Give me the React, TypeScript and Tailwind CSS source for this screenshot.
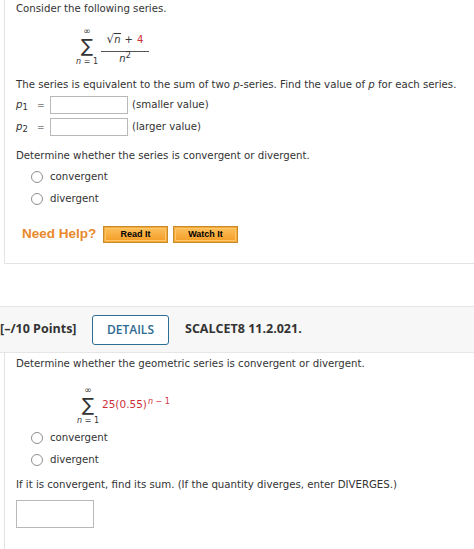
import React from 'react';

const Radio = ({ label }: { label: string }) => (
    <div className="flex items-center h-[22px]">
        <span className="ml-[26px] w-[12px] h-[12px] rounded-full border border-[#8f8f8f] bg-white" />
        <span className="ml-[7px] leading-none">{label}</span>
    </div>
);

const SumColumn = () => (
    <div className="w-[28px] flex flex-col items-center text-[#333]">
        <div className="h-[8px] text-[9px] leading-[6px]">∞</div>
        <div className="h-[15px] text-[18px] leading-[19px]">∑</div>
        <div className="mt-[6px] h-[10px] text-[8px] leading-[10px] whitespace-nowrap">
            <i>n</i> = 1
        </div>
    </div>
);

const HelpButton = ({ label }: { label: string }) => (
    <div className="w-[65px] h-[17px] border border-[#c98a2c] bg-[#f7a935] p-[1px]">
        <div className="h-full border border-[#fcc66c] bg-gradient-to-b from-[#fbbd55] to-[#f5a02a] flex items-center justify-center text-[9px] font-bold text-black font-['Liberation_Sans',Arial,sans-serif] leading-none">
            {label}
        </div>
    </div>
);

const PRow = ({ sub, note }: { sub: string; note: string }) => (
    <div className="flex items-center h-[22px]">
        <span className="w-[21px] italic leading-none">
            p<sub className="not-italic text-[8.5px]">{sub}</sub>
        </span>
        <span className="w-[13px] text-[9px] leading-none">=</span>
        <span className="w-[78px] h-[18px] border border-[#b8b8b8] bg-white" />
        <span className="ml-[4px] leading-none">{note}</span>
    </div>
);

export default function App() {
    return (
        <div className="w-[474px] h-[549px] overflow-hidden bg-white text-[#333] text-[10.2px] font-['DejaVu_Sans',Verdana,sans-serif]">
            <div className="ml-[4px] border-l border-b border-[#e3e3e3] h-[264px] pl-[11px]">
                <div className="h-[17px] leading-[17px]">Consider the following series.</div>
                <div className="mt-[11px] ml-[57px] flex h-[42px]">
                    <SumColumn />
                    <div className="flex flex-col items-center w-[48px]">
                        <div className="w-full h-[24px] border-b border-[#555] flex items-end justify-center pb-[6px] leading-none text-[10px]">
                            <span className="text-[12px] leading-none">√</span>
                            <span className="border-t border-[#333] pt-[1px] italic">n</span>
                            <span className="ml-[4px]">+</span>
                            <span className="ml-[4px] text-[#cc2f3b]">4</span>
                        </div>
                        <div className="pt-[1px] text-[10px] leading-[12px]">
                            <i>n</i>
                            <sup className="text-[8px]">2</sup>
                        </div>
                    </div>
                </div>
                <div className="mt-[6px] h-[18px] leading-[18px] whitespace-nowrap">
                    The series is equivalent to the sum of two <i>p</i>-series. Find the value of <i>p</i> for each series.
                </div>
                <PRow sub="1" note="(smaller value)" />
                <PRow sub="2" note="(larger value)" />
                <div className="mt-[9px] h-[18px] leading-[18px]">
                    Determine whether the series is convergent or divergent.
                </div>
                <div className="-ml-[11px] mt-[1px]">
                    <Radio label="convergent" />
                    <Radio label="divergent" />
                </div>
                <div className="mt-[14px] ml-[6px] h-[20px] flex items-center">
                    <span className="text-[13.5px] font-bold text-[#e8892c] font-['Liberation_Sans',Arial,sans-serif] leading-none w-[81px]">
                        Need Help?
                    </span>
                    <div className="flex gap-[5px]">
                        <HelpButton label="Read It" />
                        <HelpButton label="Watch It" />
                    </div>
                </div>
            </div>
            <div className="h-[42px]" />
            <div className="border-t border-b border-[#e6e6e6] bg-[#f7f7f7] h-[47px] flex items-center font-['Open_Sans',sans-serif] font-bold text-[12.5px] text-[#333]">
                <span className="w-[92px]">[–/10 Points]</span>
                <span className="w-[77px] h-[30px] border border-[#2e6d92] rounded-[3px] bg-white flex items-center justify-center font-semibold text-[12px] text-[#2d6a8f]">
                    DETAILS
                </span>
                <span className="ml-[16px]">SCALCET8 11.2.021.</span>
            </div>
            <div className="ml-[4px] border-l border-[#e3e3e3] pl-[11px] pt-[2px] h-[200px]">
                <div className="h-[18px] leading-[18px]">
                    Determine whether the geometric series is convergent or divergent.
                </div>
                <div className="mt-[14px] ml-[58px] flex h-[39px]">
                    <SumColumn />
                    <div className="pt-[12px] text-[#cc2f3b] text-[10.5px] leading-none whitespace-nowrap">
                        25(0.55)
                        <sup className="text-[8px] ml-[1px]">
                            <i>n</i> − 1
                        </sup>
                    </div>
                </div>
                <div className="-ml-[11px] mt-[1px]">
                    <Radio label="convergent" />
                    <Radio label="divergent" />
                </div>
                <div className="mt-[5px] h-[18px] leading-[18px] whitespace-nowrap">
                    If it is convergent, find its sum. (If the quantity diverges, enter DIVERGES.)
                </div>
                <div className="mt-[6px] w-[78px] h-[28px] border border-[#b8b8b8] bg-white" />
            </div>
        </div>
    );
}
